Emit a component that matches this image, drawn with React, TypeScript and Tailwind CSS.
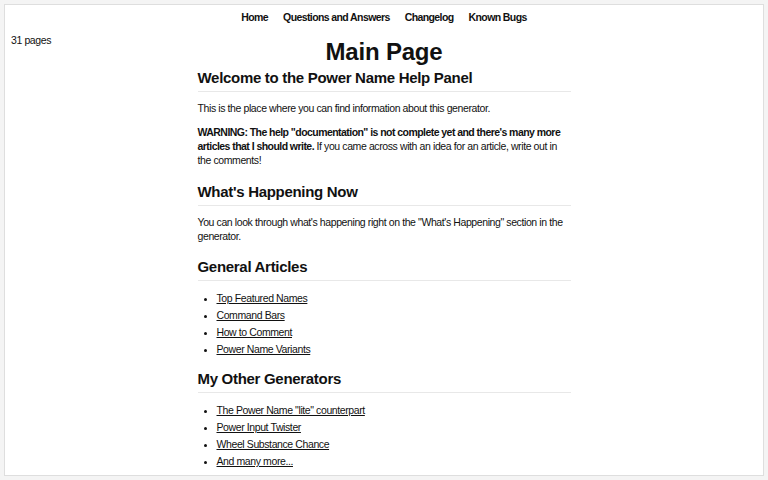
const navLinks = ["Home", "Questions and Answers", "Changelog", "Known Bugs"];

const generalArticles = [
  "Top Featured Names",
  "Command Bars",
  "How to Comment",
  "Power Name Variants",
];

const otherGenerators = [
  'The Power Name "lite" counterpart',
  "Power Input Twister",
  "Wheel Substance Chance",
  "And many more...",
];

function Heading({ children, className }: { children: React.ReactNode; className: string }) {
  return (
    <h2
      className={`text-[15px] font-bold leading-[18px] tracking-[-0.3px] pb-[4px] border-b border-[#e8e8e8] mb-[9px] ${className}`}
    >
      {children}
    </h2>
  );
}

function LinkList({ items }: { items: string[] }) {
  return (
    <ul className="list-disc pl-[19px] leading-[17px]">
      {items.map((item) => (
        <li key={item}>
          <a href="#" className="underline">
            {item}
          </a>
        </li>
      ))}
    </ul>
  );
}

export default function App() {
  return (
    <div
      className="h-screen bg-[#f4f4f4] p-[4px] text-[#111]"
      style={{ fontFamily: '"Liberation Sans", Arial, sans-serif' }}
    >
      <div className="h-full bg-white border border-[#dedede] overflow-hidden">
        <nav className="flex justify-center gap-[15px] pt-[5px] text-[10.5px] leading-[14px] font-bold tracking-[-0.6px]">
          {navLinks.map((link) => (
            <a key={link} href="#">
              {link}
            </a>
          ))}
        </nav>
        <div className="grid grid-cols-[1fr_373px_1fr] mt-[9px] text-[10.5px] leading-[14px] tracking-[-0.4px]">
          <div className="pl-[6px]">31 pages</div>
          <main className="pt-[5px]">
            <h1 className="text-center text-[24px] font-bold leading-[28px] tracking-[-0.2px]">
              Main Page
            </h1>
            <Heading className="mt-[3px]">Welcome to the Power Name Help Panel</Heading>
            <p>This is the place where you can find information about this generator.</p>
            <p className="mt-[10px]">
              <b className="tracking-[-0.55px]">
                WARNING: The help "documentation" is not complete yet and there's many more
                articles that I should write.
              </b>{" "}
              If you came across with an idea for an article, write out in the comments!
            </p>
            <Heading className="mt-[16px]">What's Happening Now</Heading>
            <p>
              You can look through what's happening right on the "What's Happening" section in
              the generator.
            </p>
            <Heading className="mt-[15px]">General Articles</Heading>
            <LinkList items={generalArticles} />
            <Heading className="mt-[12px]">My Other Generators</Heading>
            <LinkList items={otherGenerators} />
          </main>
          <div />
        </div>
      </div>
    </div>
  );
}
